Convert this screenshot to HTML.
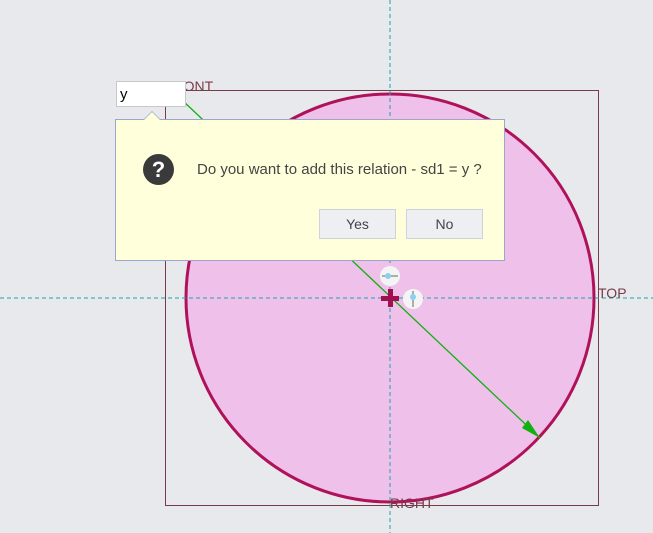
<!DOCTYPE html>
<html><head><style>
body{margin:0;width:653px;height:533px;background:#e8e9ed;position:relative;overflow:hidden;font-family:"Liberation Sans",sans-serif}
.dlg{position:absolute;left:115px;top:119px;width:388px;height:140px;background:#ffffdc;border:1px solid #9aa8c8}
.btn{position:absolute;top:89px;width:75px;height:28px;background:#eeeff3;border:1px solid #cfd2d8;font-size:14px;color:#444;text-align:center;line-height:28px}
</style></head><body>
<svg width="653" height="533" style="position:absolute;left:0;top:0">
<rect x="165.5" y="90.5" width="433" height="415" fill="none" stroke="#7a3a4a" stroke-width="1"/>
<circle cx="390" cy="298" r="204" fill="#eec0ea" stroke="#b0125a" stroke-width="3"/>
<line x1="0" y1="298" x2="653" y2="298" stroke="#1aa8b0" stroke-dasharray="4,3"/>
<line x1="390" y1="0" x2="390" y2="533" stroke="#1aa8b0" stroke-dasharray="4,3"/>
<line x1="182" y1="100" x2="540" y2="438" stroke="#10b010" stroke-width="1.3"/>
<polygon points="540,438 522,428 528,420" fill="#10b010"/>
<rect x="381" y="296" width="18" height="5" fill="#a01050"/>
<rect x="388" y="289" width="5" height="18" fill="#a01050"/>
<circle cx="390" cy="276" r="10" fill="#f4f4f4"/><line x1="382" y1="276" x2="398" y2="276" stroke="#666"/><circle cx="388" cy="276" r="3" fill="#8cd0ee"/>
<circle cx="413" cy="299" r="10" fill="#f4f4f4"/><line x1="413" y1="291" x2="413" y2="307" stroke="#666"/><circle cx="413" cy="297" r="3" fill="#8cd0ee"/>
<text x="165" y="91" font-size="14" fill="#7a3a4a" font-family="Liberation Sans">FRONT</text>
<text x="598" y="298" font-size="14" fill="#7a3a4a" font-family="Liberation Sans">TOP</text>
<text x="390" y="508" font-size="14" fill="#7a3a4a" font-family="Liberation Sans">RIGHT</text>
</svg>
<div style="position:absolute;left:116px;top:81px;width:70px;height:26px;background:#fff;border:1px solid #c8c8c8;font-size:15px;line-height:26px;padding-left:3px;box-sizing:border-box">y</div>
<div class="dlg">
<div style="position:absolute;left:27px;top:34px;width:31px;height:31px;border-radius:50%;background:#3a3a3a;color:#fff;font-weight:bold;font-size:22px;text-align:center;line-height:31px">?</div>
<div style="position:absolute;left:81px;top:41px;font-size:15px;color:#444">Do you want to add this relation - sd1 = y ?</div>
<div class="btn" style="left:203px">Yes</div>
<div class="btn" style="left:290px">No</div>
</div>
<div style="position:absolute;left:143px;top:111px;width:0;height:0;border-left:9px solid transparent;border-right:9px solid transparent;border-bottom:9px solid #9aa8c8"></div>
<div style="position:absolute;left:144px;top:112px;width:0;height:0;border-left:8px solid transparent;border-right:8px solid transparent;border-bottom:8px solid #ffffdc"></div>
</body></html>
